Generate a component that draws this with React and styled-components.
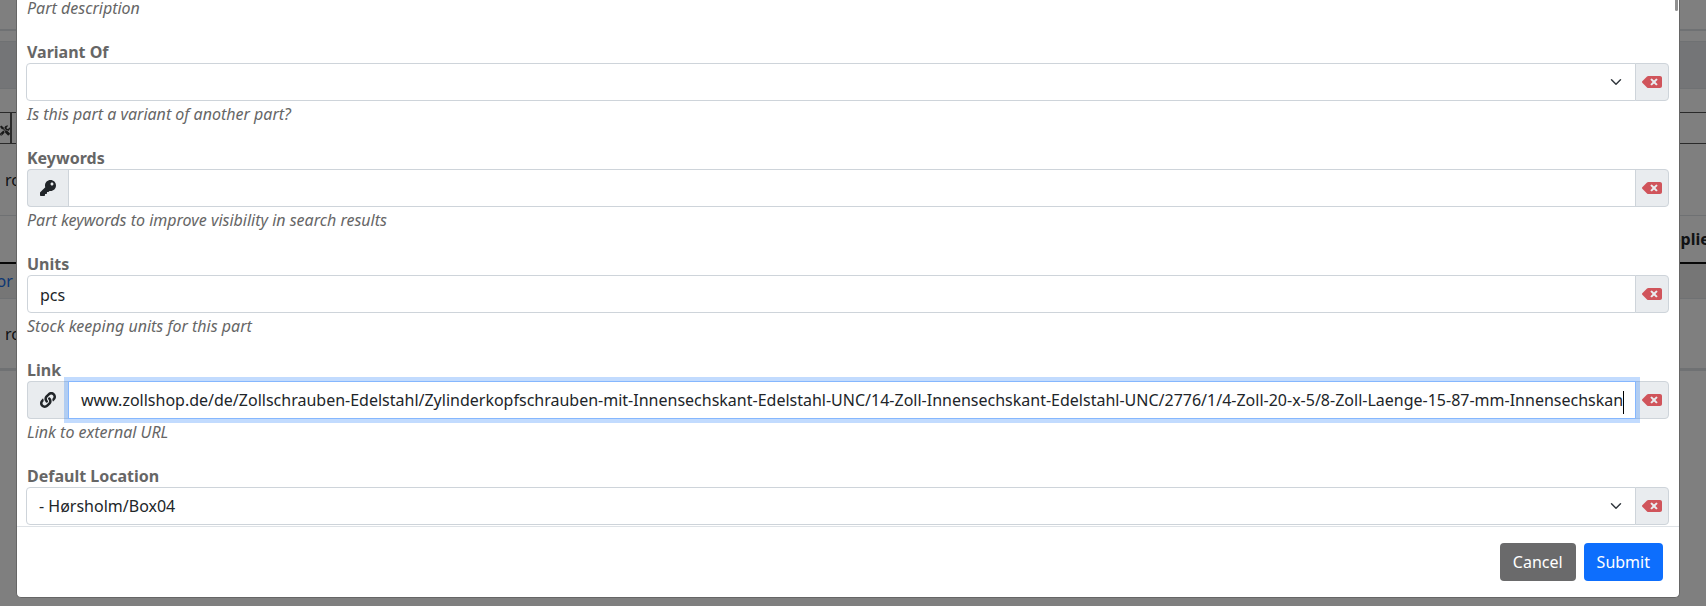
import React from 'react';
import styled, { createGlobalStyle } from 'styled-components';
import { FaKey, FaLink, FaBackspace, FaTools, FaEdit } from 'react-icons/fa';

const GlobalStyle = createGlobalStyle`
    html, body {
        margin: 0;
        padding: 0;
        height: 100%;
        overflow: hidden;
        background: #fff;
    }
    body {
        font-family: "Noto Sans", "Open Sans", sans-serif;
        font-size: 16px;
        color: #212529;
    }
`;

const Page = styled.div`
    position: relative;
    width: 1706px;
    height: 606px;
    overflow: hidden;
`;

/* the page behind the dialog, only its edges show */
const Behind = styled.div`
    display: flex;
    flex-direction: column;
`;

const Row = styled.div`
    box-sizing: border-box;
    height: ${props => props.$height}px;
    display: flex;
    align-items: center;
    justify-content: ${props => props.$end ? 'flex-end' : 'flex-start'};
    background: ${props => props.$bg || 'transparent'};
    border-bottom: ${props => props.$line ? `${props.$line}px solid ${props.$lineColor || '#dee2e6'}` : 'none'};
    white-space: nowrap;
    overflow: hidden;
`;

const RowText = styled.span`
    padding-left: 5px;
    line-height: 24px;
    color: #212529;
`;

const LinkText = styled.span`
    margin-left: -9px;
    color: #1a6fe8;
`;

const HeadText = styled.span`
    margin-right: -19px;
    font-weight: 700;
    color: #212529;
`;

const ToolGroup = styled.div`
    display: flex;
    width: 100%;
    height: 100%;
    border-top: 1px solid #555;
    border-bottom: 1px solid #555;
    box-sizing: border-box;
`;

const ToolButton = styled.div`
    width: ${props => props.$width}px;
    display: flex;
    align-items: flex-end;
    justify-content: flex-end;
    padding-bottom: 6px;
    box-sizing: border-box;
    border-right: 2px solid #555;
    font-size: 13px;
    color: #333;
    overflow: hidden;
`;

const Backdrop = styled.div`
    position: absolute;
    inset: 0;
    background: rgba(0, 0, 0, 0.5);
`;

const Modal = styled.div`
    position: absolute;
    top: 0;
    left: 16px;
    width: 1664px;
    height: 598px;
    box-sizing: border-box;
    display: flex;
    flex-direction: column;
    background: #fff;
    border-left: 1px solid #666;
    border-right: 1px solid #666;
    border-bottom: 1px solid #666;
    border-radius: 0 0 5px 5px;
`;

const ModalBody = styled.div`
    position: relative;
    height: 526px;
    padding: 0 10px;
    overflow: hidden;
    flex: none;
`;

const ScrollThumb = styled.div`
    position: absolute;
    top: 0;
    right: 1px;
    width: 3px;
    height: 11px;
    border-radius: 0 0 2px 2px;
    background: #909090;
`;

const ModalFooter = styled.div`
    display: flex;
    justify-content: flex-end;
    gap: 8px;
    padding: 16px 16px 0 0;
    border-top: 1px solid #dee2e6;
`;

const Button = styled.button`
    height: 38px;
    padding: 0 13px;
    border: none;
    border-radius: 4px;
    font: inherit;
    line-height: 24px;
    color: #fff;
    background: ${props => props.$primary ? '#0d6efd' : '#6a6a6b'};
`;

const Field = styled.div`
    padding-bottom: 19px;
`;

const Label = styled.div`
    height: 24px;
    font-weight: 700;
    font-size: 16px;
    line-height: 26px;
    color: #666;
`;

const Help = styled.div`
    margin-top: 1px;
    font-style: italic;
    font-size: 16px;
    line-height: 24px;
    color: #666;
`;

const FirstHelp = styled(Help)`
    margin-top: -4px;
    padding-bottom: 19px;
`;

const Group = styled.div`
    display: flex;
    height: 38px;
    margin-left: ${props => props.$select ? '-1px' : '0'};
`;

const Prepend = styled.div`
    flex: none;
    width: 41px;
    box-sizing: border-box;
    display: flex;
    align-items: center;
    justify-content: center;
    background: #e9ecef;
    border: 1px solid #ced4da;
    border-right: none;
    border-radius: 4px 0 0 4px;
    font-size: 16px;
    color: #212529;
`;

const Input = styled.div`
    position: relative;
    flex: 1;
    min-width: 0;
    box-sizing: border-box;
    display: flex;
    align-items: center;
    padding: ${props => props.$select ? '0' : '2px'} 12px 0;
    background: #fff;
    border: 1px solid ${props => props.$focus ? '#86b7fe' : '#ced4da'};
    border-radius: ${props => props.$joined ? '0' : '4px 0 0 4px'};
    box-shadow: ${props => props.$focus ? '0 0 0 4px rgba(13, 110, 253, 0.25)' : 'none'};
    z-index: ${props => props.$focus ? 3 : 0};
    line-height: 24px;
    white-space: nowrap;
    overflow: ${props => props.$focus ? 'visible' : 'hidden'};
`;

const Caret = styled.span`
    display: inline-block;
    width: 1px;
    height: 23px;
    background: #000;
    vertical-align: middle;
`;

const Chevron = styled.svg`
    position: absolute;
    right: 13px;
    top: 12px;
    width: 12px;
    height: 12px;
`;

const Clear = styled.div`
    flex: none;
    width: 34px;
    box-sizing: border-box;
    display: flex;
    align-items: center;
    justify-content: center;
    margin-left: -1px;
    background: #e9ecef;
    border: 1px solid #ced4da;
    border-radius: 0 4px 4px 0;
    font-size: 20px;
    color: #d0545b;
`;

const URL_VALUE = 'www.zollshop.de/de/Zollschrauben-Edelstahl/Zylinderkopfschrauben-mit-Innensechskant-Edelstahl-UNC/14-Zoll-Innensechskant-Edelstahl-UNC/2776/1/4-Zoll-20-x-5/8-Zoll-Laenge-15-87-mm-Innensechskan';

const SelectArrow = () => (
    <Chevron viewBox="0 0 16 16">
        <path fill="none" stroke="#343a40" strokeLinecap="round" strokeLinejoin="round" strokeWidth="2" d="m2 5 6 6 6-6" />
    </Chevron>
);

const FormField = ({ label, help, icon, select, joined, focus, children }) => (
    <Field>
        <Label>{label}</Label>
        <Group $select={select}>
            {icon && <Prepend>{icon}</Prepend>}
            <Input $joined={joined} $focus={focus} $select={select}>
                {children}
                {select && <SelectArrow />}
            </Input>
            <Clear><FaBackspace /></Clear>
        </Group>
        {help && <Help>{help}</Help>}
    </Field>
);

const App = () => (
    <Page>
        <GlobalStyle />
        <Behind>
            <Row $height={29} />
            <Row $height={2} $bg="#dee2e6" />
            <Row $height={11} $line={1} />
            <Row $height={47} $bg="#e9ebee" $line={1} />
            <Row $height={23} />
            <Row $height={32}>
                <ToolGroup>
                    <ToolButton $width={12}><FaTools /></ToolButton>
                    <ToolButton $width={20}><FaEdit /></ToolButton>
                </ToolGroup>
            </Row>
            <Row $height={72} $line={1}><RowText>row</RowText></Row>
            <Row $height={48} $end $line={2} $lineColor="#111"><HeadText>Suppliers</HeadText></Row>
            <Row $height={35} $bg="#ececec" $line={1}><LinkText>for c</LinkText></Row>
            <Row $height={69}><RowText>row</RowText></Row>
            <Row $height={3} $bg="#dee2e6" />
        </Behind>
        <Backdrop />
        <Modal>
            <ModalBody>
                <ScrollThumb />
                <FirstHelp>Part description</FirstHelp>
                <FormField label="Variant Of" help="Is this part a variant of another part?" select />
                <FormField label="Keywords" help="Part keywords to improve visibility in search results" icon={<FaKey />} joined />
                <FormField label="Units" help="Stock keeping units for this part">pcs</FormField>
                <FormField label="Link" help="Link to external URL" icon={<FaLink />} joined focus>
                    <span>{URL_VALUE}<Caret /></span>
                </FormField>
                <FormField label="Default Location" select>- Hørsholm/Box04</FormField>
            </ModalBody>
            <ModalFooter>
                <Button>Cancel</Button>
                <Button $primary>Submit</Button>
            </ModalFooter>
        </Modal>
    </Page>
);

export default App;
